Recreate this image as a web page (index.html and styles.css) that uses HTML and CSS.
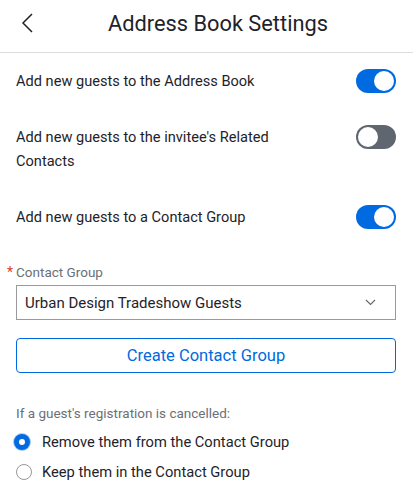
FILE: index.html
```html
<!DOCTYPE html>
<html lang="en">
<head>
  <meta charset="utf-8">
  <title>Address Book Settings</title>
  <meta name="viewport" content="width=device-width, initial-scale=1.0">
  <link rel="stylesheet" href="styles.css">
</head>
<body>
  <!-- top bar with back arrow -->
  <header class="topbar">
    <button class="back" aria-label="back">
      <svg width="12" height="20" viewBox="0 0 12 20"><path d="M11 1 L2 10 L11 19" fill="none" stroke="#222" stroke-width="1.5"/></svg>
    </button>
    <h1 class="title">Address Book Settings</h1>
  </header>

  <main class="content">
    <!-- toggle rows -->
    <div class="setting">
      <span class="setting-text">Add new guests to the Address Book</span>
      <span class="switch on"><span class="knob"></span></span>
    </div>
    <div class="setting">
      <span class="setting-text">Add new guests to the invitee's Related Contacts</span>
      <span class="switch"><span class="knob"></span></span>
    </div>
    <div class="setting">
      <span class="setting-text">Add new guests to a Contact Group</span>
      <span class="switch on"><span class="knob"></span></span>
    </div>

    <!-- contact group picker -->
    <div class="field">
      <label class="field-label"><span class="req">*</span>Contact Group</label>
      <div class="select">
        <span>Urban Design Tradeshow Guests</span>
        <svg width="11" height="7" viewBox="0 0 11 7"><path d="M1 1 L5.5 5.5 L10 1" fill="none" stroke="#666" stroke-width="1.1"/></svg>
      </div>
      <button class="outline-btn">Create Contact Group</button>
    </div>

    <!-- cancellation behaviour -->
    <div class="radios">
      <p class="radios-label">If a guest's registration is cancelled:</p>
      <label class="radio"><span class="dot checked"></span>Remove them from the Contact Group</label>
      <label class="radio"><span class="dot"></span>Keep them in the Contact Group</label>
    </div>
  </main>
</body>
</html>
```

FILE: styles.css
```css
* {
  margin: 0;
  padding: 0;
  box-sizing: border-box;
}
body {
  font-family: "Roboto", "Liberation Sans", sans-serif;
  color: #1f2329;
  background: #fff;
}
/* header */
.topbar {
  height: 53px;
  border-bottom: 1px solid #ddd;
  display: flex;
  align-items: center;
  justify-content: center;
  position: relative;
}
.back {
  position: absolute;
  left: 20px;
  top: 13px;
  background: none;
  border: none;
  width: 14px;
  height: 20px;
}
.title {
  font-size: 21.8px;
  font-weight: 400;
  margin: -6px 0 0 23px;
}
.content {
  padding: 0 17px 0 16px;
}
/* toggle rows */
.setting {
  display: flex;
  align-items: flex-start;
  justify-content: space-between;
  gap: 60px;
  padding: 16px 0;
}
.setting-text {
  font-size: 14.6px;
  line-height: 24px;
}
.switch {
  flex: none;
  width: 40px;
  height: 24px;
  border-radius: 12px;
  background: #5f6670;
  position: relative;
}
.switch .knob {
  position: absolute;
  top: 2px;
  left: 2px;
  width: 20px;
  height: 20px;
  border-radius: 50%;
  background: #fff;
}
.switch.on {
  background: #006ae1;
}
.switch.on .knob {
  left: 18px;
}
/* contact group field */
.field {
  margin-top: 18px;
}
.field-label {
  display: block;
  font-size: 13.5px;
  color: #6b7078;
  line-height: 18px;
  margin-left: -9px;
}
.req {
  color: #e0401c;
  margin-right: 3px;
  font-size: 14px;
}
.select {
  margin-top: 4px;
  height: 35px;
  border: 1px solid #9a9a9a;
  display: flex;
  align-items: center;
  justify-content: space-between;
  padding: 0 19px 0 8px;
  font-size: 15px;
}
.outline-btn {
  margin-top: 18px;
  width: 100%;
  height: 35px;
  border: 1px solid #006ae1;
  border-radius: 4px;
  background: #fff;
  color: #006ae1;
  font-family: inherit;
  font-size: 16.5px;
}
/* radio group */
.radios {
  margin-top: 31px;
}
.radios-label {
  font-size: 13.5px;
  color: #6b7078;
  line-height: 18px;
  margin-bottom: 5px;
}
.radio {
  display: flex;
  align-items: center;
  gap: 10px;
  font-size: 14.7px;
  height: 30px;
}
.dot {
  flex: none;
  width: 16px;
  height: 16px;
  border-radius: 50%;
  border: 1px solid #9a9a9a;
  position: relative;
}
.dot.checked {
  border: none;
  background: #006ae1;
  box-shadow: 0 0 0 1px rgba(0, 106, 225, 0.35);
  margin: 0 2px 0 -2px;
}
.dot.checked::after {
  content: "";
  position: absolute;
  top: 5px;
  left: 5px;
  width: 6px;
  height: 6px;
  border-radius: 50%;
  background: #fff;
}
```
